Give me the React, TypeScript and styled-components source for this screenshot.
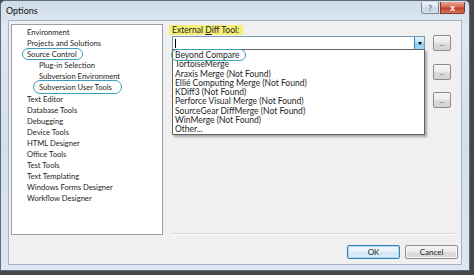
import * as React from 'react';
import styled, { createGlobalStyle } from 'styled-components';

const GlobalStyle = createGlobalStyle`
  html, body {
    margin: 0;
    padding: 0;
    background: #474747;
  }
  body {
    font-family: Lato, "Open Sans", sans-serif;
    color: #1e1e1e;
  }
`;

const Window = styled.div`
  width: 470px;
  height: 271px;
  box-sizing: border-box;
  display: flex;
  flex-direction: column;
  background: linear-gradient(180deg, #cfdcea 0%, #dfe8f3 10%, #d3dfec 55%, #dde7f2 100%);
  border: 1px solid #5f6b78;
  border-radius: 5px 5px 0 0;
`;

const TitleBar = styled.div`
  height: 19px;
  display: flex;
  align-items: flex-start;
  padding: 0 4px 0 5px;
`;

const Title = styled.span`
  font-size: 9px;
  line-height: 19px;
  color: #111;
  flex: 1;
`;

const CaptionButton = styled.div<{ $close?: boolean }>`
  width: ${(p) => (p.$close ? 25 : 18)}px;
  height: 12px;
  box-sizing: border-box;
  border: 1px solid ${(p) => (p.$close ? '#7a3a30' : '#7d8a9b')};
  border-top: none;
  border-radius: ${(p) => (p.$close ? '0 0 3px 0' : '0 0 0 3px')};
  background: ${(p) =>
    p.$close
      ? 'linear-gradient(180deg, #e8a497 0%, #d46a55 45%, #c2402a 55%, #d8735c 100%)'
      : 'linear-gradient(180deg, #edf2f7 0%, #d9e2ec 45%, #c6d3e1 55%, #d5e0eb 100%)'};
  color: ${(p) => (p.$close ? '#fff' : '#5b6a7c')};
  font-size: ${(p) => (p.$close ? 9 : 8)}px;
  font-weight: bold;
  display: flex;
  align-items: center;
  justify-content: center;
  line-height: 1;
  margin-left: ${(p) => (p.$close ? 1 : 0)}px;
  margin-top: 1px;
`;

const Client = styled.div`
  flex: 1;
  margin: 0 7px 5px 7px;
  background: #f0f0f0;
  border: 1px solid #a4b2c2;
  display: flex;
  flex-direction: column;
  padding: 3px 3px 0 2px;
`;

const Main = styled.div`
  display: flex;
  gap: 9px;
  height: 211px;
`;

const Tree = styled.div`
  width: 152px;
  height: 211px;
  box-sizing: border-box;
  background: #fff;
  border: 1px solid #9a9fa6;
  padding-top: 2px;
`;

const TreeItem = styled.div<{ $indent: number }>`
  height: 11.1px;
  line-height: 11px;
  font-size: 7.6px;
  padding-left: ${(p) => p.$indent}px;
  white-space: nowrap;
`;

const Circled = styled.span<{ $pad?: string }>`
  position: relative;
  &::after {
    content: '';
    position: absolute;
    inset: ${(p) => p.$pad || '-1px -3px -1px -5px'};
    border: 1.5px solid #3aa0b9;
    border-radius: 7px;
  }
`;

const RightPane = styled.div`
  flex: 1;
  position: relative;
  display: flex;
  flex-direction: column;
  margin-right: 3px;
`;

const Label = styled.div`
  margin-top: 1px;
  height: 10px;
  line-height: 10px;
  font-size: 8.6px;
  align-self: flex-start;
  margin-left: -3px;
  padding: 0 4px 0 3px;
  background: #f4ee77;
  u {
    text-decoration: underline;
    text-underline-offset: 1px;
  }
`;

const Row = styled.div<{ $top: number }>`
  display: flex;
  align-items: center;
  gap: 8px;
  margin-top: ${(p) => p.$top}px;
  height: 16px;
  padding-right: 4px;
`;

const Combo = styled.div<{ $hidden?: boolean }>`
  width: 253px;
  height: 14px;
  box-sizing: border-box;
  background: #fff;
  border: 1px solid #7a9cb8;
  display: flex;
  align-items: center;
  visibility: ${(p) => (p.$hidden ? 'hidden' : 'visible')};
`;

const Caret = styled.span`
  width: 1px;
  height: 9px;
  background: #000;
  margin-left: 2px;
`;

const DropButton = styled.div`
  margin-left: auto;
  width: 10px;
  height: 12px;
  box-sizing: border-box;
  border-left: 1px solid #3c7fb1;
  background: linear-gradient(180deg, #e3f3fb 0%, #bfe3f6 45%, #8fcbee 55%, #a8d8f2 100%);
  display: flex;
  align-items: center;
  justify-content: center;
  &::before {
    content: '';
    border-left: 2.5px solid transparent;
    border-right: 2.5px solid transparent;
    border-top: 3px solid #000;
  }
`;

const DotsButton = styled.div`
  width: 18px;
  height: 16px;
  box-sizing: border-box;
  margin-left: auto;
  border: 1px solid #8c8c8c;
  border-radius: 2px;
  background: linear-gradient(180deg, #f6f6f6 0%, #ececec 45%, #dcdcdc 55%, #d4d4d4 100%);
  font-size: 7px;
  line-height: 14px;
  text-align: center;
  color: #555;
`;

const DropList = styled.div`
  position: absolute;
  top: 25px;
  left: 0;
  width: 253px;
  height: 86px;
  box-sizing: border-box;
  background: #fff;
  border: 1px solid #646464;
  box-shadow: 2px 2px 2px rgba(0, 0, 0, 0.3);
  padding: 1px 0 0 2px;
  z-index: 2;
`;

const ListItem = styled.div`
  height: 9.3px;
  line-height: 9.3px;
  font-size: 8.5px;
  white-space: nowrap;
`;

const Separator = styled.div`
  margin-top: auto;
  height: 1px;
  background: #d5d5d5;
  border-bottom: 1px solid #fff;
`;

const Footer = styled.div`
  display: flex;
  justify-content: flex-end;
  gap: 5px;
  padding-top: 10px;
`;

const DialogButton = styled.div<{ $default?: boolean }>`
  width: 53px;
  height: 14px;
  box-sizing: border-box;
  border: 1px solid ${(p) => (p.$default ? '#3c7fb1' : '#8c8c8c')};
  border-radius: 2px;
  background: ${(p) =>
    p.$default
      ? 'linear-gradient(180deg, #f2f8fc 0%, #e6f1f9 45%, #d4e8f5 55%, #dcebf6 100%)'
      : 'linear-gradient(180deg, #f4f4f4 0%, #ebebeb 45%, #dddddd 55%, #d6d6d6 100%)'};
  box-shadow: ${(p) => (p.$default ? 'inset 0 0 0 1px #a8dcf5' : 'inset 0 0 0 1px #fbfbfb')};
  font-size: 8px;
  line-height: 12px;
  text-align: center;
  color: #1e1e1e;
`;

type Node = { label: string; indent: number; mark?: string };

const treeNodes: Node[] = [
  { label: 'Environment', indent: 15 },
  { label: 'Projects and Solutions', indent: 15 },
  { label: 'Source Control', indent: 15, mark: '-1px -6px -1px -5px' },
  { label: 'Plug-in Selection', indent: 27 },
  { label: 'Subversion Environment', indent: 27 },
  { label: 'Subversion User Tools', indent: 27, mark: '-2px -10px -2px -6px' },
  { label: 'Text Editor', indent: 15 },
  { label: 'Database Tools', indent: 15 },
  { label: 'Debugging', indent: 15 },
  { label: 'Device Tools', indent: 15 },
  { label: 'HTML Designer', indent: 15 },
  { label: 'Office Tools', indent: 15 },
  { label: 'Test Tools', indent: 15 },
  { label: 'Text Templating', indent: 15 },
  { label: 'Windows Forms Designer', indent: 15 },
  { label: 'Workflow Designer', indent: 15 },
];

const diffTools = [
  'TortoiseMerge',
  'Araxis Merge (Not Found)',
  'Ellié Computing Merge (Not Found)',
  'KDiff3 (Not Found)',
  'Perforce Visual Merge (Not Found)',
  'SourceGear DiffMerge (Not Found)',
  'WinMerge (Not Found)',
  'Other...',
];

export default function App() {
  return (
    <>
      <GlobalStyle />
      <Window>
        <TitleBar>
          <Title>Options</Title>
          <CaptionButton>?</CaptionButton>
          <CaptionButton $close>x</CaptionButton>
        </TitleBar>
        <Client>
          <Main>
            <Tree>
              {treeNodes.map((n) => (
                <TreeItem key={n.label} $indent={n.indent}>
                  {n.mark ? <Circled $pad={n.mark}>{n.label}</Circled> : n.label}
                </TreeItem>
              ))}
            </Tree>
            <RightPane>
              <Label>
                External <u>D</u>iff Tool:
              </Label>
              <Row $top={0}>
                <Combo>
                  <Caret />
                  <DropButton />
                </Combo>
                <DotsButton>...</DotsButton>
              </Row>
              <Row $top={13}>
                <Combo $hidden />
                <DotsButton>...</DotsButton>
              </Row>
              <Row $top={12}>
                <Combo $hidden />
                <DotsButton>...</DotsButton>
              </Row>
              <DropList>
                <ListItem>
                  <Circled $pad="-1px -7px -1px -4px">Beyond Compare</Circled>
                </ListItem>
                {diffTools.map((t) => (
                  <ListItem key={t}>{t}</ListItem>
                ))}
              </DropList>
              <Separator />
            </RightPane>
          </Main>
          <Footer>
            <DialogButton $default>OK</DialogButton>
            <DialogButton>Cancel</DialogButton>
          </Footer>
        </Client>
      </Window>
    </>
  );
}
